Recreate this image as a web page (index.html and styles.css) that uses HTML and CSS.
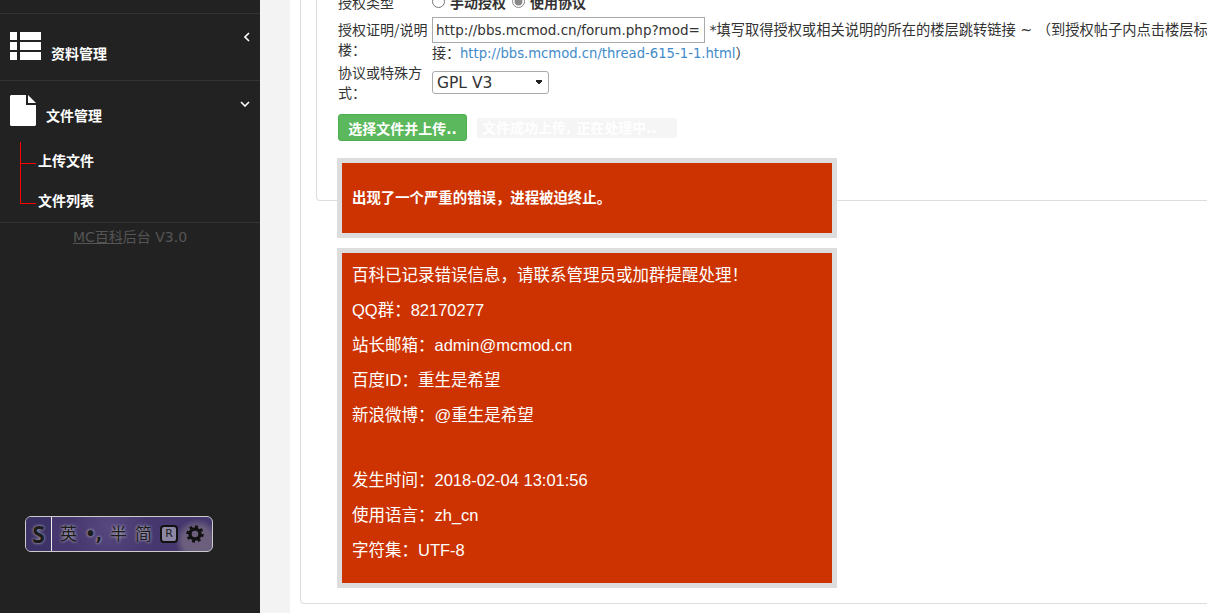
FILE: index.html
```html
<!DOCTYPE html>
<html lang="zh-CN">
<head>
    <meta charset="UTF-8">
    <title>MC百科后台</title>
    <link rel="stylesheet" href="styles.css">
</head>
<body>
    <aside class="sidebar">
        <div class="nav-group nav-group-data">
            <svg class="nav-icon" width="31" height="28" viewBox="0 0 31 28" fill="#fff">
                <rect x="0" y="0" width="7" height="8"/><rect x="10" y="0" width="21" height="8"/>
                <rect x="0" y="10" width="7" height="8"/><rect x="10" y="10" width="21" height="8"/>
                <rect x="0" y="20" width="7" height="8"/><rect x="10" y="20" width="21" height="8"/>
            </svg>
            <span class="nav-title nav-title-data">资料管理</span>
            <svg class="chevron chevron-left" width="6" height="10" viewBox="0 0 6 10" fill="none" stroke="#fff" stroke-width="1.6"><path d="M5 1 1 5l4 4"/></svg>
        </div>
        <div class="nav-group nav-group-file">
            <svg class="nav-icon" width="26" height="31" viewBox="0 0 26 31" fill="#fff">
                <path d="M1 0h15v10h10v20l-1 1H1l-1-1V1z"/>
                <path d="M18 0l8 8h-8z"/>
            </svg>
            <span class="nav-title nav-title-file">文件管理</span>
            <svg class="chevron chevron-down" width="10" height="6" viewBox="0 0 10 6" fill="none" stroke="#fff" stroke-width="1.6"><path d="M1 1l4 4 4-4"/></svg>
        </div>
        <ul class="sub-nav">
            <li>上传文件</li>
            <li>文件列表</li>
        </ul>
        <div class="sidebar-foot"><span class="foot-link">MC百科</span>后台 V3.0</div>
        <div class="ime-bar">
            <span class="ime-logo">S</span>
            <span class="ime-items">
                <span>英</span>
                <span class="ime-punct">•,</span>
                <span>半</span>
                <span>简</span>
                <span class="ime-r">R</span>
                <svg width="18" height="18" viewBox="0 0 18 18"><circle cx="9" cy="9" r="5" fill="none" stroke="#111" stroke-width="3.4"/><circle cx="9" cy="9" r="7.4" fill="none" stroke="#111" stroke-width="2.6" stroke-dasharray="2.9 2.9"/></svg>
            </span>
        </div>
    </aside>

    <main class="content">
        <div class="page">
            <div class="panel-outer">
                <div class="panel-inner">
                    <div class="form-row form-row-type">
                        <label class="form-label">授权类型</label>
                        <div class="form-field">
                            <input type="radio" name="type"><b class="radio-text">手动授权</b><input type="radio" name="type" checked><b class="radio-text">使用协议</b>
                        </div>
                    </div>
                    <div class="form-row form-row-proof">
                        <label class="form-label">授权证明/说明楼：</label>
                        <div class="form-field">
                            <div class="nowrap"><input class="text-input" type="text" value="http://bbs.mcmod.cn/forum.php?mod=redirect"> <span class="hint">*填写取得授权或相关说明的所在的楼层跳转链接 ~ （到授权帖子内点击楼层标</span></div>
                            <div class="nowrap">接：<a class="link" href="#">http://bbs.mcmod.cn/thread-615-1-1.html</a>）</div>
                        </div>
                    </div>
                    <div class="form-row form-row-license">
                        <label class="form-label">协议或特殊方式：</label>
                        <div class="form-field">
                            <select class="select-input"><option>GPL V3</option></select>
                        </div>
                    </div>
                    <div class="upload-row">
                        <button class="btn-upload" type="button">选择文件并上传..</button>
                        <div class="upload-state">文件成功上传, 正在处理中..</div>
                    </div>
                    <div class="error-box error-box-head">
                        <div class="error-inner"><b>出现了一个严重的错误，进程被迫终止。</b></div>
                    </div>
                </div>
                <div class="error-box error-box-detail">
                    <div class="error-inner">
                        <p>百科已记录错误信息，请联系管理员或加群提醒处理！</p>
                        <p>QQ群：82170277</p>
                        <p>站长邮箱：admin@mcmod.cn</p>
                        <p>百度ID：重生是希望</p>
                        <p>新浪微博：@重生是希望</p>
                        <p class="blank"></p>
                        <p>发生时间：2018-02-04 13:01:56</p>
                        <p>使用语言：zh_cn</p>
                        <p>字符集：UTF-8</p>
                    </div>
                </div>
            </div>
        </div>
    </main>
</body>
</html>
```

FILE: styles.css
```css
* {
    box-sizing: border-box;
}
html, body {
    margin: 0;
    height: 613px;
    overflow: hidden;
}
body {
    display: flex;
    font-family: "DejaVu Sans", "Noto Sans CJK SC", sans-serif;
    font-size: 14px;
    line-height: 20px;
    color: #333;
}

/* sidebar */
.sidebar {
    position: relative;
    width: 260px;
    flex: none;
    background-color: #222;
    color: #fff;
    padding-top: 13px;
}
.nav-group {
    position: relative;
    display: flex;
    border-top: 1px solid #333;
    padding-left: 10px;
}
.nav-group-data {
    height: 67px;
    padding-top: 18px;
}
.nav-group-file {
    height: 58px;
    padding-top: 14px;
}
.nav-icon {
    flex: none;
}
.nav-title {
    font-weight: bold;
}
.nav-title-data {
    margin: 12px 0 0 10px;
}
.nav-title-file {
    margin: 11px 0 0 10px;
}
.chevron {
    position: absolute;
}
.chevron-left {
    right: 10px;
    top: 18px;
}
.chevron-down {
    right: 10px;
    top: 20px;
}
.sub-nav {
    list-style: none;
    margin: 0;
    padding: 0;
    height: 85px;
    border-bottom: 1px solid #333;
    font-weight: bold;
}
.sub-nav li {
    position: relative;
    height: 40px;
    padding: 13px 0 0 38px;
}
.sub-nav li::before {
    content: "";
    position: absolute;
    left: 20px;
    top: -15px;
    width: 15px;
    height: 40px;
    border-left: 1px solid #f00;
    border-bottom: 1px solid #f00;
}
.sub-nav li:first-child::before {
    top: 4px;
    height: 21px;
}
.sidebar-foot {
    margin-top: 4px;
    text-align: center;
    color: #555;
    font-size: 14px;
}
.foot-link {
    text-decoration: underline;
}
.ime-bar {
    position: absolute;
    left: 25px;
    top: 516px;
    width: 188px;
    height: 36px;
    display: flex;
    border: 1px solid #ccc;
    border-radius: 6px;
    color: #1c1c1c;
    background-color: #46386e;
    background-image: radial-gradient(circle at 92% 70%, #6b5f7d 0, #6b5f7d 14px, transparent 22px), radial-gradient(circle at 45% 30%, #57487f 0, transparent 40px);
    overflow: hidden;
}
.ime-logo {
    width: 26px;
    border-right: 1px solid #eee;
    text-align: center;
    font-size: 23px;
    line-height: 34px;
    font-weight: bold;
    font-family: "Noto Sans", sans-serif;
    background-color: #3d3266;
    text-shadow: 0 0 3px #ccc;
}
.ime-items {
    flex: 1;
    display: flex;
    align-items: center;
    gap: 8px;
    padding-left: 8px;
    font-size: 17px;
    text-shadow: 0 0 3px #ddd;
}
.ime-items > span {
    width: 17px;
    text-align: center;
}
.ime-punct {
    font-weight: bold;
}
.ime-items > .ime-r {
    width: 18px;
    height: 18px;
    border: 2px solid #111;
    border-radius: 4px;
    font-size: 11px;
    line-height: 14px;
    background-color: #8d86a5;
    text-shadow: none;
}

/* main area */
.content {
    flex: 1;
    min-width: 0;
    background-color: #f3f3f3;
    padding-left: 30px;
}
.page {
    height: 613px;
    background-color: #fff;
    padding-left: 10px;
    overflow: hidden;
}
.panel-outer {
    height: 612px;
    margin-right: -10px;
    padding-left: 15px;
    border: 1px solid #ddd;
    border-top: 0;
    border-radius: 0 0 0 4px;
}
.panel-inner {
    height: 209px;
    margin-right: -10px;
    padding: 0 0 0 20px;
    border: 1px solid #ddd;
    border-top: 0;
    border-radius: 0 0 0 4px;
}
.form-row {
    display: flex;
    margin-left: 1px;
}
.form-row-type {
    height: 20px;
    margin-top: -8px;
}
.form-row-proof {
    height: 43px;
    margin-top: 5px;
}
.form-row-proof .form-label,
.form-row-license .form-label {
    padding-top: 2px;
}
.form-label {
    width: 94px;
    flex: none;
    font-family: "Noto Sans CJK SC", sans-serif;
}
.form-field {
    flex: 1;
    min-width: 0;
}
.form-field input[type="radio"] {
    margin: 0 5px 0 0;
    accent-color: #888;
}
.radio-text {
    margin-right: 6px;
    font-family: "Noto Sans CJK SC", sans-serif;
}
.nowrap {
    white-space: nowrap;
}
.hint {
    font-size: 14.25px;
}
.text-input {
    width: 273px;
    height: 26px;
    padding: 1px 3px;
    border: 1px solid #aaa;
    font-family: inherit;
    font-size: 13.5px;
    color: #333;
}
.form-row-proof .nowrap:first-child {
    height: 26px;
}
.link {
    color: #428bca;
    font-size: 13.2px;
    text-decoration: none;
}
.select-input {
    display: block;
    appearance: none;
    width: 117px;
    height: 23px;
    margin-top: 11px;
    padding: 0 0 0 4px;
    border: 1px solid #aaa;
    border-radius: 3px;
    background-color: #fff;
    background-image: linear-gradient(45deg, transparent 50%, #222 50%), linear-gradient(-45deg, transparent 50%, #222 50%);
    background-size: 3px 6px, 3px 6px;
    background-position: 103px 8px, 106px 8px;
    background-repeat: no-repeat;
    font-family: inherit;
    font-size: 15.5px;
    color: #333;
}
.upload-row {
    display: flex;
    align-items: center;
    gap: 10px;
    margin: 12px 0 0 1px;
}
.btn-upload {
    width: 129px;
    height: 27px;
    padding: 0;
    border: 1px solid #4cae4c;
    border-radius: 3px;
    background-color: #5cb85c;
    color: #fff;
    font-family: inherit;
    font-size: 14px;
    font-weight: bold;
}
.upload-state {
    width: 200px;
    height: 20px;
    padding-left: 5px;
    background-color: #f5f5f5;
    border-radius: 2px;
    color: #fff;
    font-weight: bold;
    white-space: nowrap;
    overflow: hidden;
}
.error-box {
    width: 500px;
    border: 5px solid #ddd;
    background-color: #c30;
    color: #fff;
    font-family: "Liberation Sans", "Noto Sans CJK SC", sans-serif;
}
.error-inner {
    padding: 10px;
}
.error-inner p {
    margin: 0 0 10px;
    font-size: 16.5px;
    line-height: 25px;
}
.error-inner .blank {
    height: 20px;
}
.error-box-head {
    height: 80px;
    margin-top: 17px;
    font-size: 14.4px;
}
.error-box-head .error-inner {
    height: 70px;
    display: flex;
    align-items: center;
}
.error-box-detail {
    height: 340px;
    margin: 47px 0 0 21px;
}
```
